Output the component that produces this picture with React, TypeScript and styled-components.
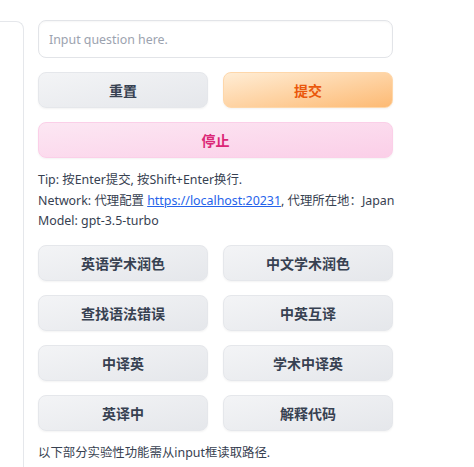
import styled, { createGlobalStyle } from "styled-components";

const Global = createGlobalStyle`
  html, body {
    margin: 0;
    padding: 0;
    background: #ffffff;
  }
  body {
    font-family: "Noto Sans", "Noto Sans CJK SC", sans-serif;
    color: #374151;
  }
`;

const Page = styled.div`
  display: flex;
  align-items: flex-start;
  height: 467px;
  overflow: hidden;
`;

const SidePanel = styled.div`
  flex: 0 0 23px;
  margin-top: 21px;
  height: 460px;
  border-top: 1px solid #e5e7eb;
  border-right: 1px solid #e5e7eb;
  border-top-right-radius: 8px;
`;

const Column = styled.div`
  width: 355px;
  margin-left: 14px;
  margin-top: 20px;
  display: flex;
  flex-direction: column;
  gap: 14px;
`;

const Input = styled.input`
  box-sizing: border-box;
  height: 38px;
  width: 100%;
  padding: 0 10px;
  border: 1px solid #e2e4e8;
  border-radius: 8px;
  font-family: inherit;
  font-size: 12.4px;
  color: #374151;
  outline: none;
  box-shadow: inset 0 1px 2px rgba(0, 0, 0, 0.04);
  &::placeholder {
    color: #9ca3af;
  }
`;

const Row = styled.div`
  display: grid;
  grid-template-columns: 1fr 1fr;
  column-gap: 15px;
  row-gap: 14px;
`;

type Variant = "secondary" | "primary" | "stop";

const palette: Record<Variant, { from: string; to: string; text: string; border: string }> = {
  secondary: { from: "#f3f4f6", to: "#e5e7eb", text: "#374151", border: "#e5e7eb" },
  primary: { from: "#ffedd5", to: "#fdba74", text: "#ea580c", border: "#fed7aa" },
  stop: { from: "#fce7f3", to: "#fbcfe8", text: "#db2777", border: "#fbcfe8" },
};

const Button = styled.button<{ $variant?: Variant }>`
  box-sizing: border-box;
  height: 36px;
  width: 100%;
  border-radius: 8px;
  border: 1px solid ${(p) => palette[p.$variant ?? "secondary"].border};
  background: linear-gradient(
    to bottom right,
    ${(p) => palette[p.$variant ?? "secondary"].from},
    ${(p) => palette[p.$variant ?? "secondary"].to}
  );
  color: ${(p) => palette[p.$variant ?? "secondary"].text};
  font-family: inherit;
  font-size: 14px;
  font-weight: 700;
  cursor: pointer;
  box-shadow: 0 1px 2px rgba(0, 0, 0, 0.05);
`;

const Info = styled.div`
  font-size: 12.4px;
  line-height: 20.5px;
  color: #374151;
  margin-top: -2px;
  margin-bottom: -1px;
  white-space: nowrap;
`;

const Link = styled.a`
  color: #2563eb;
  text-decoration: underline;
`;

const Note = styled.div`
  font-size: 12.4px;
  line-height: 20px;
  color: #374151;
  margin-top: -2px;
  white-space: nowrap;
`;

const tools = [
  "英语学术润色",
  "中文学术润色",
  "查找语法错误",
  "中英互译",
  "中译英",
  "学术中译英",
  "英译中",
  "解释代码",
];

export default function App() {
  return (
    <Page>
      <Global />
      <SidePanel />
      <Column>
        <Input placeholder="Input question here." />
        <Row>
          <Button>重置</Button>
          <Button $variant="primary">提交</Button>
        </Row>
        <Button $variant="stop">停止</Button>
        <Info>
          Tip: 按Enter提交, 按Shift+Enter换行.
          <br />
          Network: 代理配置 <Link href="#">https://localhost:20231</Link>, 代理所在地：Japan
          <br />
          Model: gpt-3.5-turbo
        </Info>
        <Row>
          {tools.map((t) => (
            <Button key={t}>{t}</Button>
          ))}
        </Row>
        <Note>以下部分实验性功能需从input框读取路径.</Note>
      </Column>
    </Page>
  );
}
